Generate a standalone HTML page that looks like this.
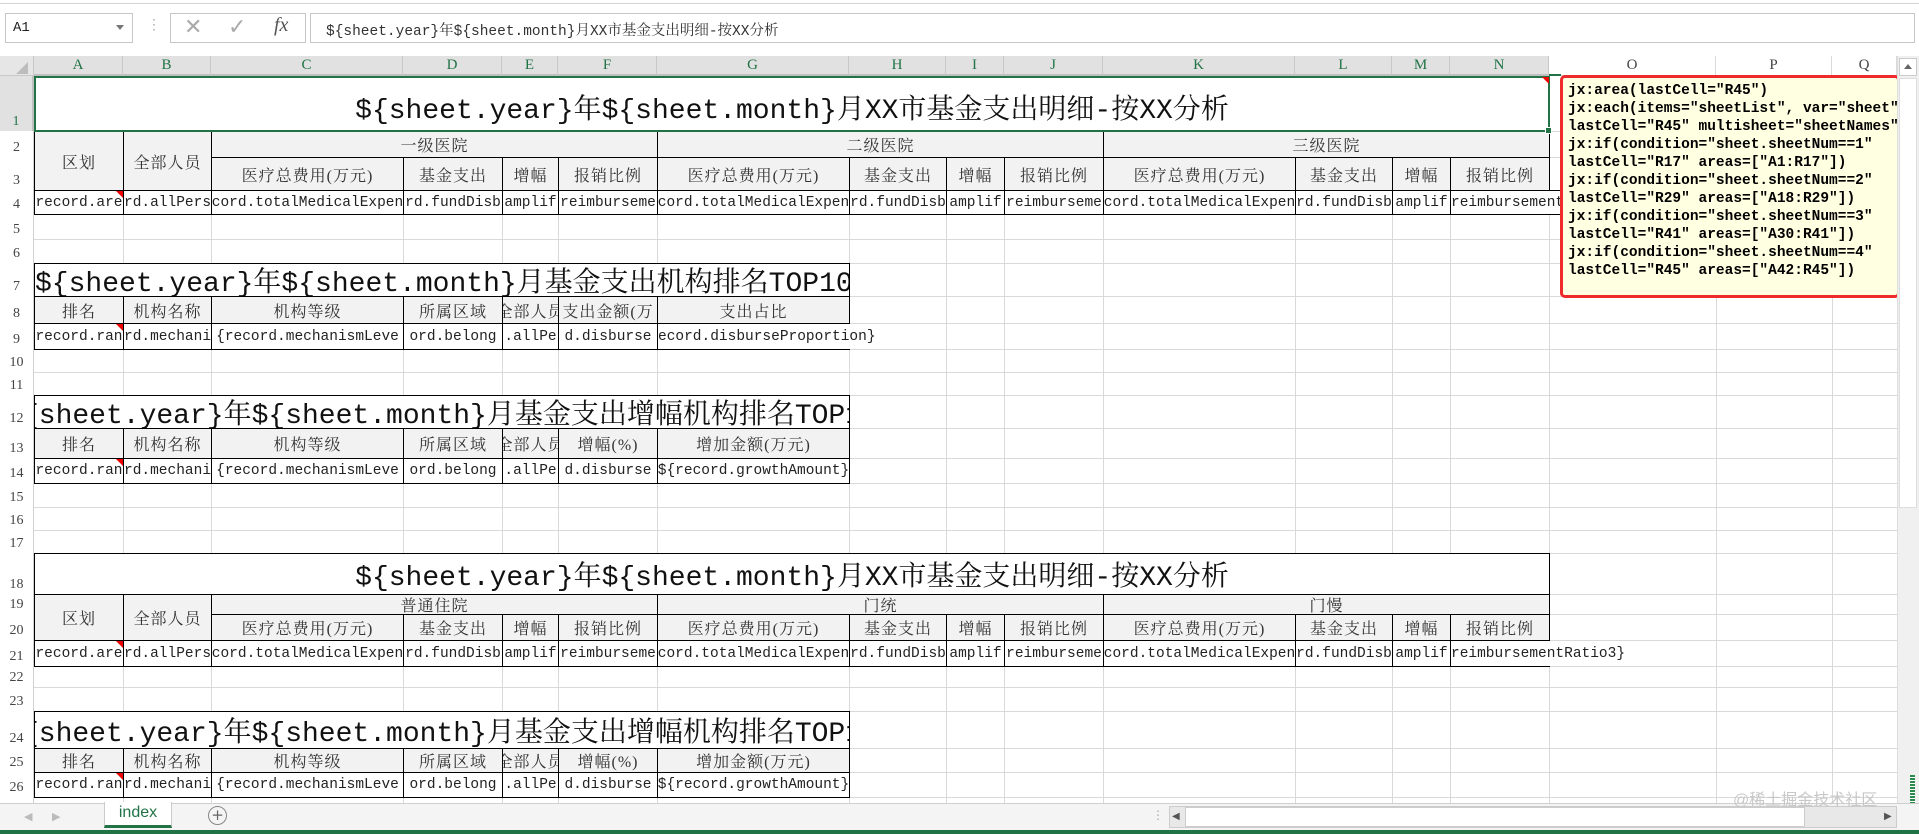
<!DOCTYPE html>
<html><head><meta charset="utf-8"><style>
*{margin:0;padding:0;box-sizing:border-box}
body{width:1919px;height:834px;overflow:hidden;background:#fff;position:relative;font-family:"Liberation Serif","Noto Serif CJK SC",serif;color:#222}
div{position:absolute}
.v{width:1px;background:#d9d9d9;top:56px;height:747px}
.h{height:1px;background:#d9d9d9;left:0;width:1897px}
.c{display:flex;align-items:center;justify-content:center;overflow:hidden;white-space:nowrap;border:1px solid #000}
.hd{background:#f2f2f2;font-size:16px;letter-spacing:1px;color:#333}
.d{font-family:"Liberation Mono","Noto Serif CJK SC",monospace;font-size:14.5px;color:#222;background:#fff}
.t{font-family:"Liberation Mono","Noto Serif CJK SC",monospace;font-size:28px;color:#111;background:#fff}
.ch{top:56px;height:20px;display:flex;align-items:center;justify-content:center;font-size:15px;color:#217346;background:#e1e1e1;border-right:1px solid #c8c8c8;border-bottom:2px solid #c0c0c0}
.cw{top:56px;height:20px;display:flex;align-items:center;justify-content:center;font-size:15px;color:#444;background:#fff;border-right:1px solid #d9d9d9;border-bottom:1px solid #d0d0d0}
.rh{left:0;width:34px;display:flex;align-items:flex-end;justify-content:center;padding-bottom:1px;font-size:14px;color:#444;background:#fff;border-right:1px solid #d0d0d0}
.tri{width:0;height:0;border-top:7px solid #e00;border-left:7px solid transparent}
</style></head><body>
<div style="left:0;top:3px;width:1919px;height:1px;background:#d4d4d4"></div>
<div style="left:5px;top:13px;width:128px;height:30px;border:1px solid #c6c6c6;font-family:'Liberation Mono',monospace;font-size:14px;padding:6px 0 0 7px">A1</div>
<div style="left:116px;top:25px;width:0;height:0;border-left:4px solid transparent;border-right:4px solid transparent;border-top:5px solid #777"></div>
<div style="left:147px;top:17px;font-size:14px;color:#aaa">⋮</div>
<div style="left:170px;top:13px;width:136px;height:30px;border:1px solid #c6c6c6"></div>
<div style="left:184px;top:15px;font-size:22px;color:#aaa;font-family:'DejaVu Sans'">✕</div>
<div style="left:228px;top:15px;font-size:22px;color:#aaa;font-family:'DejaVu Sans'">✓</div>
<div style="left:274px;top:14px;font-size:20px;color:#555;font-style:italic;font-family:'Liberation Serif'">fx</div>
<div style="left:310px;top:13px;width:1605px;height:30px;border:1px solid #c6c6c6;font-family:'Liberation Mono','Noto Serif CJK SC',monospace;font-size:14.5px;padding:5px 0 0 15px;color:#333">${sheet.year}年${sheet.month}月XX市基金支出明细-按XX分析</div>
<div style="left:0;top:56px;width:1897px;height:747px;background:#fff"></div>
<div class="v" style="left:123px"></div><div class="v" style="left:211px"></div><div class="v" style="left:403px"></div><div class="v" style="left:502px"></div><div class="v" style="left:558px"></div><div class="v" style="left:657px"></div><div class="v" style="left:849px"></div><div class="v" style="left:946px"></div><div class="v" style="left:1004px"></div><div class="v" style="left:1103px"></div><div class="v" style="left:1295px"></div><div class="v" style="left:1392px"></div><div class="v" style="left:1450px"></div><div class="v" style="left:1549px"></div><div class="v" style="left:1716px"></div><div class="v" style="left:1832px"></div>
<div class="h" style="top:131px"></div><div class="h" style="top:157px"></div><div class="h" style="top:190px"></div><div class="h" style="top:214px"></div><div class="h" style="top:239px"></div><div class="h" style="top:263px"></div><div class="h" style="top:296px"></div><div class="h" style="top:323px"></div><div class="h" style="top:349px"></div><div class="h" style="top:372px"></div><div class="h" style="top:395px"></div><div class="h" style="top:428px"></div><div class="h" style="top:458px"></div><div class="h" style="top:483px"></div><div class="h" style="top:507px"></div><div class="h" style="top:530px"></div><div class="h" style="top:553px"></div><div class="h" style="top:594px"></div><div class="h" style="top:614px"></div><div class="h" style="top:640px"></div><div class="h" style="top:666px"></div><div class="h" style="top:687px"></div><div class="h" style="top:711px"></div><div class="h" style="top:748px"></div><div class="h" style="top:772px"></div><div class="h" style="top:797px"></div>
<div style="left:0;top:56px;width:34px;height:20px;background:#e6e6e6;border-right:1px solid #c8c8c8;border-bottom:1px solid #c8c8c8"></div>
<div style="left:16px;top:62px;width:0;height:0;border-left:12px solid transparent;border-bottom:12px solid #bdbdbd"></div>
<div class="ch" style="left:34px;width:89px">A</div><div class="ch" style="left:123px;width:88px">B</div><div class="ch" style="left:211px;width:192px">C</div><div class="ch" style="left:403px;width:99px">D</div><div class="ch" style="left:502px;width:56px">E</div><div class="ch" style="left:558px;width:99px">F</div><div class="ch" style="left:657px;width:192px">G</div><div class="ch" style="left:849px;width:97px">H</div><div class="ch" style="left:946px;width:58px">I</div><div class="ch" style="left:1004px;width:99px">J</div><div class="ch" style="left:1103px;width:192px">K</div><div class="ch" style="left:1295px;width:97px">L</div><div class="ch" style="left:1392px;width:58px">M</div><div class="ch" style="left:1450px;width:99px">N</div>
<div class="cw" style="left:1549px;width:167px">O</div><div class="cw" style="left:1716px;width:116px">P</div><div class="cw" style="left:1832px;width:65px">Q</div>
<div class="rh" style="top:76px;height:55px;background:#e1e1e1;color:#217346;border-right:2px solid #c0c0c0">1</div>
<div class="rh" style="top:131px;height:26px">2</div><div class="rh" style="top:157px;height:33px">3</div><div class="rh" style="top:190px;height:24px">4</div><div class="rh" style="top:214px;height:25px">5</div><div class="rh" style="top:239px;height:24px">6</div><div class="rh" style="top:263px;height:33px">7</div><div class="rh" style="top:296px;height:27px">8</div><div class="rh" style="top:323px;height:26px">9</div><div class="rh" style="top:349px;height:23px">10</div><div class="rh" style="top:372px;height:23px">11</div><div class="rh" style="top:395px;height:33px">12</div><div class="rh" style="top:428px;height:30px">13</div><div class="rh" style="top:458px;height:25px">14</div><div class="rh" style="top:483px;height:24px">15</div><div class="rh" style="top:507px;height:23px">16</div><div class="rh" style="top:530px;height:23px">17</div><div class="rh" style="top:553px;height:41px">18</div><div class="rh" style="top:594px;height:20px">19</div><div class="rh" style="top:614px;height:26px">20</div><div class="rh" style="top:640px;height:26px">21</div><div class="rh" style="top:666px;height:21px">22</div><div class="rh" style="top:687px;height:24px">23</div><div class="rh" style="top:711px;height:37px">24</div><div class="rh" style="top:748px;height:24px">25</div><div class="rh" style="top:772px;height:25px">26</div><div class="rh" style="top:797px;height:6px"></div>

<div class="c hd" style="left:34px;top:131px;width:90px;height:60px">区划</div>
<div class="c hd" style="left:123px;top:131px;width:89px;height:60px">全部人员</div>
<div class="c hd" style="left:211px;top:131px;width:447px;height:27px">一级医院</div>
<div class="c hd" style="left:657px;top:131px;width:447px;height:27px">二级医院</div>
<div class="c hd" style="left:1103px;top:131px;width:447px;height:27px">三级医院</div>
<div class="c hd" style="left:211px;top:157px;width:193px;height:34px">医疗总费用(万元)</div><div class="c hd" style="left:403px;top:157px;width:100px;height:34px">基金支出</div><div class="c hd" style="left:502px;top:157px;width:57px;height:34px">增幅</div><div class="c hd" style="left:558px;top:157px;width:100px;height:34px">报销比例</div>
<div class="c hd" style="left:657px;top:157px;width:193px;height:34px">医疗总费用(万元)</div><div class="c hd" style="left:849px;top:157px;width:98px;height:34px">基金支出</div><div class="c hd" style="left:946px;top:157px;width:59px;height:34px">增幅</div><div class="c hd" style="left:1004px;top:157px;width:100px;height:34px">报销比例</div>
<div class="c hd" style="left:1103px;top:157px;width:193px;height:34px">医疗总费用(万元)</div><div class="c hd" style="left:1295px;top:157px;width:98px;height:34px">基金支出</div><div class="c hd" style="left:1392px;top:157px;width:59px;height:34px">增幅</div><div class="c hd" style="left:1450px;top:157px;width:100px;height:34px">报销比例</div>
<div class="c d" style="left:34px;top:190px;width:90px;height:25px">record.are</div><div class="c d" style="left:123px;top:190px;width:89px;height:25px">rd.allPers</div><div class="c d" style="left:211px;top:190px;width:193px;height:25px">cord.totalMedicalExpen</div><div class="c d" style="left:403px;top:190px;width:100px;height:25px">rd.fundDisb</div><div class="c d" style="left:502px;top:190px;width:57px;height:25px">amplif</div><div class="c d" style="left:558px;top:190px;width:100px;height:25px">reimburseme</div>
<div class="c d" style="left:657px;top:190px;width:193px;height:25px">cord.totalMedicalExpen</div><div class="c d" style="left:849px;top:190px;width:98px;height:25px">rd.fundDisb</div><div class="c d" style="left:946px;top:190px;width:59px;height:25px">amplif</div><div class="c d" style="left:1004px;top:190px;width:100px;height:25px">reimburseme</div>
<div class="c d" style="left:1103px;top:190px;width:193px;height:25px">cord.totalMedicalExpen</div><div class="c d" style="left:1295px;top:190px;width:98px;height:25px">rd.fundDisb</div><div class="c d" style="left:1392px;top:190px;width:59px;height:25px">amplif</div><div class="c d" style="left:1450px;top:190px;width:110px;height:25px;border-right:none;justify-content:flex-start">reimbursement</div>
<div class="c t" style="left:34px;top:76px;width:1516px;height:56px;border:2px solid #217346;padding-top:6px">${sheet.year}年${sheet.month}月XX市基金支出明细-按XX分析</div>
<div style="left:1545px;top:127px;width:7px;height:7px;background:#217346;border:1px solid #fff"></div>
<div class="tri" style="left:116px;top:191px"></div>
<div class="tri" style="left:1542px;top:77px"></div>

<div class="c t" style="left:34px;top:263px;width:816px;height:34px;justify-content:flex-start">${sheet.year}年${sheet.month}月基金支出机构排名TOP10</div>
<div class="c hd" style="left:34px;top:296px;width:90px;height:28px">排名</div><div class="c hd" style="left:123px;top:296px;width:89px;height:28px">机构名称</div><div class="c hd" style="left:211px;top:296px;width:193px;height:28px">机构等级</div><div class="c hd" style="left:403px;top:296px;width:100px;height:28px">所属区域</div><div class="c hd" style="left:502px;top:296px;width:57px;height:28px">全部人员</div><div class="c hd" style="left:558px;top:296px;width:100px;height:28px">支出金额(万</div><div class="c hd" style="left:657px;top:296px;width:193px;height:28px">支出占比</div>
<div class="c d" style="left:34px;top:323px;width:90px;height:27px">record.ran</div><div class="c d" style="left:123px;top:323px;width:89px;height:27px">rd.mechani</div><div class="c d" style="left:211px;top:323px;width:193px;height:27px">{record.mechanismLeve</div><div class="c d" style="left:403px;top:323px;width:100px;height:27px">ord.belong</div><div class="c d" style="left:502px;top:323px;width:57px;height:27px">.allPe</div><div class="c d" style="left:558px;top:323px;width:100px;height:27px">d.disburse</div><div class="c d" style="left:657px;top:323px;width:193px;height:27px;overflow:visible;justify-content:flex-start;border-right:none">ecord.disburseProportion}</div>
<div class="tri" style="left:116px;top:324px"></div>

<div class="c t" style="left:34px;top:395px;width:816px;height:34px">${sheet.year}年${sheet.month}月基金支出增幅机构排名TOP10</div>
<div class="c hd" style="left:34px;top:428px;width:90px;height:31px">排名</div><div class="c hd" style="left:123px;top:428px;width:89px;height:31px">机构名称</div><div class="c hd" style="left:211px;top:428px;width:193px;height:31px">机构等级</div><div class="c hd" style="left:403px;top:428px;width:100px;height:31px">所属区域</div><div class="c hd" style="left:502px;top:428px;width:57px;height:31px">全部人员</div><div class="c hd" style="left:558px;top:428px;width:100px;height:31px">增幅(%)</div><div class="c hd" style="left:657px;top:428px;width:193px;height:31px">增加金额(万元)</div>
<div class="c d" style="left:34px;top:458px;width:90px;height:26px">record.ran</div><div class="c d" style="left:123px;top:458px;width:89px;height:26px">rd.mechani</div><div class="c d" style="left:211px;top:458px;width:193px;height:26px">{record.mechanismLeve</div><div class="c d" style="left:403px;top:458px;width:100px;height:26px">ord.belong</div><div class="c d" style="left:502px;top:458px;width:57px;height:26px">.allPe</div><div class="c d" style="left:558px;top:458px;width:100px;height:26px">d.disburse</div><div class="c d" style="left:657px;top:458px;width:193px;height:26px">${record.growthAmount}</div>
<div class="tri" style="left:116px;top:459px"></div>

<div class="c t" style="left:34px;top:553px;width:1516px;height:42px">${sheet.year}年${sheet.month}月XX市基金支出明细-按XX分析</div>
<div class="c hd" style="left:34px;top:594px;width:90px;height:47px">区划</div>
<div class="c hd" style="left:123px;top:594px;width:89px;height:47px">全部人员</div>
<div class="c hd" style="left:211px;top:594px;width:447px;height:21px">普通住院</div>
<div class="c hd" style="left:657px;top:594px;width:447px;height:21px">门统</div>
<div class="c hd" style="left:1103px;top:594px;width:447px;height:21px">门慢</div>
<div class="c hd" style="left:211px;top:614px;width:193px;height:27px">医疗总费用(万元)</div><div class="c hd" style="left:403px;top:614px;width:100px;height:27px">基金支出</div><div class="c hd" style="left:502px;top:614px;width:57px;height:27px">增幅</div><div class="c hd" style="left:558px;top:614px;width:100px;height:27px">报销比例</div>
<div class="c hd" style="left:657px;top:614px;width:193px;height:27px">医疗总费用(万元)</div><div class="c hd" style="left:849px;top:614px;width:98px;height:27px">基金支出</div><div class="c hd" style="left:946px;top:614px;width:59px;height:27px">增幅</div><div class="c hd" style="left:1004px;top:614px;width:100px;height:27px">报销比例</div>
<div class="c hd" style="left:1103px;top:614px;width:193px;height:27px">医疗总费用(万元)</div><div class="c hd" style="left:1295px;top:614px;width:98px;height:27px">基金支出</div><div class="c hd" style="left:1392px;top:614px;width:59px;height:27px">增幅</div><div class="c hd" style="left:1450px;top:614px;width:100px;height:27px">报销比例</div>
<div class="c d" style="left:34px;top:640px;width:90px;height:27px">record.are</div><div class="c d" style="left:123px;top:640px;width:89px;height:27px">rd.allPers</div><div class="c d" style="left:211px;top:640px;width:193px;height:27px">cord.totalMedicalExpen</div><div class="c d" style="left:403px;top:640px;width:100px;height:27px">rd.fundDisb</div><div class="c d" style="left:502px;top:640px;width:57px;height:27px">amplif</div><div class="c d" style="left:558px;top:640px;width:100px;height:27px">reimburseme</div>
<div class="c d" style="left:657px;top:640px;width:193px;height:27px">cord.totalMedicalExpen</div><div class="c d" style="left:849px;top:640px;width:98px;height:27px">rd.fundDisb</div><div class="c d" style="left:946px;top:640px;width:59px;height:27px">amplif</div><div class="c d" style="left:1004px;top:640px;width:100px;height:27px">reimburseme</div>
<div class="c d" style="left:1103px;top:640px;width:193px;height:27px">cord.totalMedicalExpen</div><div class="c d" style="left:1295px;top:640px;width:98px;height:27px">rd.fundDisb</div><div class="c d" style="left:1392px;top:640px;width:59px;height:27px">amplif</div><div class="c d" style="left:1450px;top:640px;width:100px;height:27px;overflow:visible;justify-content:flex-start;border-right:none">reimbursementRatio3}</div>
<div class="tri" style="left:116px;top:641px"></div>

<div class="c t" style="left:34px;top:711px;width:816px;height:38px">${sheet.year}年${sheet.month}月基金支出增幅机构排名TOP10</div>
<div class="c hd" style="left:34px;top:748px;width:90px;height:25px">排名</div><div class="c hd" style="left:123px;top:748px;width:89px;height:25px">机构名称</div><div class="c hd" style="left:211px;top:748px;width:193px;height:25px">机构等级</div><div class="c hd" style="left:403px;top:748px;width:100px;height:25px">所属区域</div><div class="c hd" style="left:502px;top:748px;width:57px;height:25px">全部人员</div><div class="c hd" style="left:558px;top:748px;width:100px;height:25px">增幅(%)</div><div class="c hd" style="left:657px;top:748px;width:193px;height:25px">增加金额(万元)</div>
<div class="c d" style="left:34px;top:772px;width:90px;height:26px">record.ran</div><div class="c d" style="left:123px;top:772px;width:89px;height:26px">rd.mechani</div><div class="c d" style="left:211px;top:772px;width:193px;height:26px">{record.mechanismLeve</div><div class="c d" style="left:403px;top:772px;width:100px;height:26px">ord.belong</div><div class="c d" style="left:502px;top:772px;width:57px;height:26px">.allPe</div><div class="c d" style="left:558px;top:772px;width:100px;height:26px">d.disburse</div><div class="c d" style="left:657px;top:772px;width:193px;height:26px">${record.growthAmount}</div>
<div class="tri" style="left:116px;top:773px"></div>

<div style="left:1560px;top:75px;width:340px;height:223px;border:3px solid #ee2a2a;border-radius:5px;background:#ffffe1;padding:4px 0 0 5px;overflow:hidden;font-family:'Liberation Mono',monospace;font-weight:bold;font-size:14.5px;line-height:18px;color:#000;white-space:pre">jx:area(lastCell="R45")
jx:each(items="sheetList", var="sheet"
lastCell="R45" multisheet="sheetNames"
jx:if(condition="sheet.sheetNum==1"
lastCell="R17" areas=["A1:R17"])
jx:if(condition="sheet.sheetNum==2"
lastCell="R29" areas=["A18:R29"])
jx:if(condition="sheet.sheetNum==3"
lastCell="R41" areas=["A30:R41"])
jx:if(condition="sheet.sheetNum==4"
lastCell="R45" areas=["A42:R45"])</div>
<div style="left:1549px;top:74px;width:12px;height:2px;background:#217346"></div>

<div style="left:1897px;top:56px;width:22px;height:747px;background:#f0f0f0;border-left:1px solid #ddd"></div>
<div style="left:1899px;top:58px;width:18px;height:18px;background:#fff;border:1px solid #ccc"></div>
<div style="left:1904px;top:64px;width:0;height:0;border-left:4px solid transparent;border-right:4px solid transparent;border-bottom:5px solid #666"></div>
<div style="left:1899px;top:78px;width:18px;height:430px;background:#fff;border:1px solid #ddd"></div>
<div style="left:1910px;top:775px;width:5px;height:55px;background:repeating-linear-gradient(#2c8a4c 0 2px,#fff 2px 3px)"></div>

<div style="left:0;top:803px;width:1919px;height:27px;background:#f4f4f4;border-top:1px solid #cfcfcf"></div>
<div style="left:24px;top:810px;font-size:11px;color:#bbb;font-family:'DejaVu Sans'">◀</div>
<div style="left:52px;top:810px;font-size:11px;color:#bbb;font-family:'DejaVu Sans'">▶</div>
<div style="left:104px;top:802px;width:68px;height:26px;background:#fff;border-left:1px solid #ccc;border-right:1px solid #ccc;border-bottom:3px solid #217346;font-family:'Liberation Sans',sans-serif;font-size:16px;color:#217346;text-align:center;padding-top:2px">index</div>
<div style="left:208px;top:806px;width:19px;height:19px;border:1px solid #888;border-radius:50%;font-family:'DejaVu Sans';font-size:15px;line-height:16px;text-align:center;color:#666">+</div>
<div style="left:1152px;top:808px;font-size:12px;color:#aaa">⋮</div>
<div style="left:1169px;top:806px;width:728px;height:22px;background:#e8e8e8;border:1px solid #ccc"></div>
<div style="left:1185px;top:807px;width:620px;height:20px;background:#fff;border:1px solid #ccc"></div>
<div style="left:1172px;top:811px;font-size:10px;color:#555;font-family:'DejaVu Sans'">◀</div>
<div style="left:1884px;top:811px;font-size:10px;color:#555;font-family:'DejaVu Sans'">▶</div>
<div style="left:1733px;top:786px;font-family:'Liberation Sans','Noto Sans CJK SC',sans-serif;font-size:16px;color:#c8c8c8">@稀土掘金技术社区</div>
<div style="left:0;top:830px;width:1919px;height:4px;background:#217346"></div>
</body></html>
